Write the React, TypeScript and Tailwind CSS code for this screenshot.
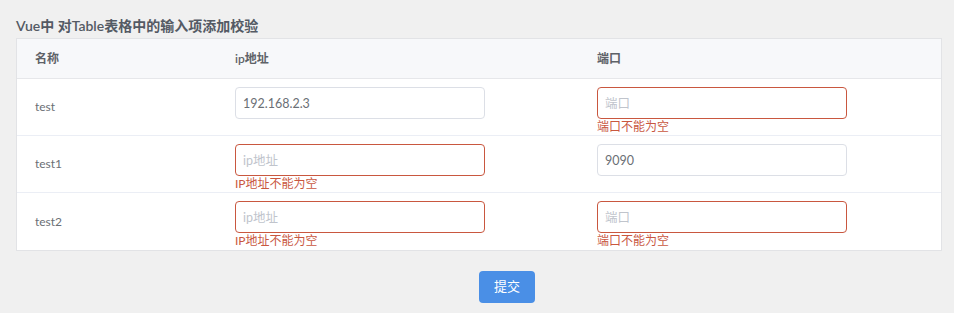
import React from "react";

const font = { fontFamily: 'Lato, "Noto Sans CJK SC", sans-serif' };

type Row = {
  name: string;
  ip: string;
  port: string;
  ipErr: boolean;
  portErr: boolean;
};

const rows: Row[] = [
  { name: "test", ip: "192.168.2.3", port: "", ipErr: false, portErr: true },
  { name: "test1", ip: "", port: "9090", ipErr: true, portErr: false },
  { name: "test2", ip: "", port: "", ipErr: true, portErr: true },
];

function Field({ value, placeholder, err, msg }: { value: string; placeholder: string; err: boolean; msg: string }) {
  return (
    <div className="flex flex-col w-[250px]">
      <input
        readOnly
        value={value}
        placeholder={placeholder}
        className={
          "h-[32px] w-[250px] rounded-[4px] border bg-white px-[7px] text-[12.5px] text-[#6b6f75] outline-none placeholder:text-[#c0c4cc] " +
          (err ? "border-[#c9573f]" : "border-[#dcdfe6]")
        }
        style={font}
      />
      {err && <div className="text-[12px] leading-[16px] text-[#c9573f]">{msg}</div>}
    </div>
  );
}

export default function App() {
  return (
    <div className="min-h-[313px] w-full bg-[#f0f0f0] pt-[16px]" style={font}>
      <div className="ml-[16px] w-[926px]">
        <div className="h-[22px] text-[14px] font-semibold leading-[20px] text-[#545a64]">Vue中 对Table表格中的输入项添加校验</div>
        <div className="border border-[#e2e3e6] bg-white">
          <div className="grid h-[40px] grid-cols-[218px_362px_1fr] items-center border-b border-[#e6e7ea] bg-[#f7f8fa] text-[12px] font-semibold text-[#5e6268]">
            <div className="pl-[18px]">名称</div>
            <div>ip地址</div>
            <div>端口</div>
          </div>
          {rows.map((r, i) => (
            <div
              key={r.name}
              className={
                "grid h-[57px] grid-cols-[218px_362px_1fr] " + (i < rows.length - 1 ? "border-b border-[#ebeef5]" : "")
              }
            >
              <div className="flex items-center pl-[18px] text-[12px] text-[#6b6f75]">{r.name}</div>
              <div className="pt-[8px]">
                <Field value={r.ip} placeholder="ip地址" err={r.ipErr} msg="IP地址不能为空" />
              </div>
              <div className="pt-[8px]">
                <Field value={r.port} placeholder="端口" err={r.portErr} msg="端口不能为空" />
              </div>
            </div>
          ))}
        </div>
        <div className="pl-[463px] pt-[20px]">
          <button className="h-[32px] w-[56px] rounded-[4px] bg-[#4a8fe6] text-[13px] text-white" style={font}>
            提交
          </button>
        </div>
      </div>
    </div>
  );
}
